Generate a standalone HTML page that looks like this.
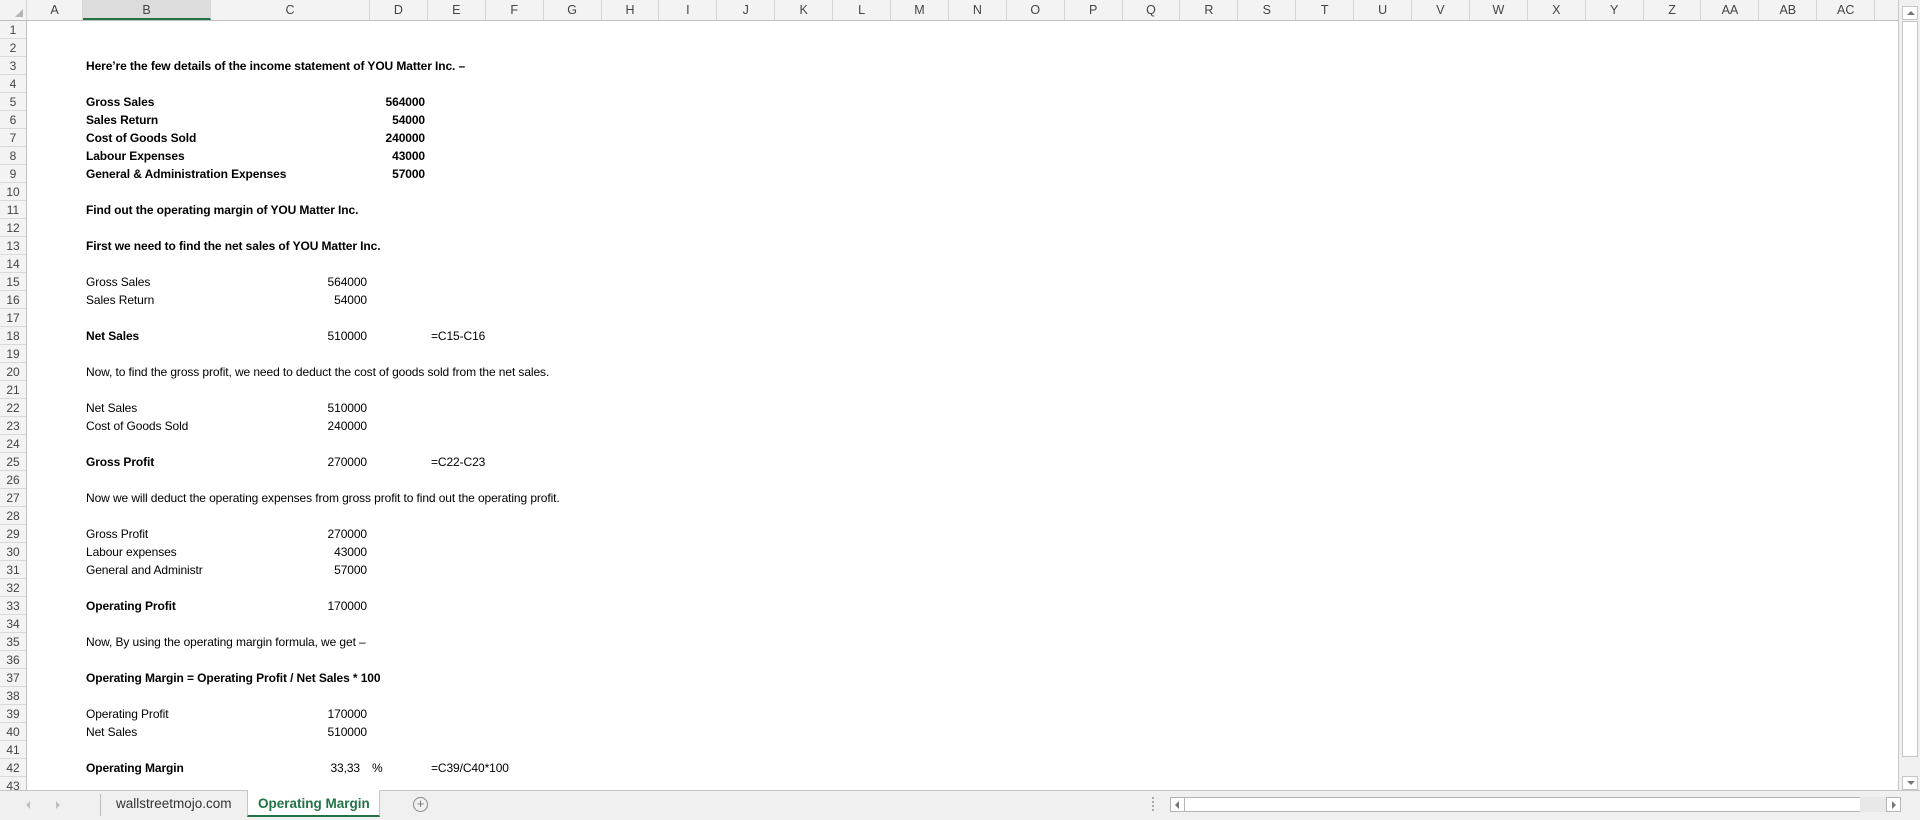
<!DOCTYPE html>
<html><head><meta charset="utf-8"><style>
*{margin:0;padding:0;box-sizing:border-box}
body{width:1920px;height:820px;overflow:hidden;background:#fff;font-family:"Liberation Sans",sans-serif;position:relative;color:#000}
#ch{position:absolute;left:0;top:0;height:21px;display:flex;background:#f3f3f3;border-bottom:1px solid #bfbfbf;width:1898px}
#ch div{border-right:1px solid #d6d6d6;font-size:12.5px;color:#444;text-align:center;line-height:21px;flex:none}
#rh{position:absolute;left:0;top:21px;width:27px;background:#f3f3f3;border-right:1px solid #bfbfbf;height:769px;overflow:hidden}
#rh div{height:18px;border-bottom:1px solid #d9d9d9;font-size:12px;color:#444;text-align:center;line-height:18px}
.c{position:absolute;height:18px;line-height:18px;font-size:12px;white-space:nowrap;letter-spacing:-0.1px}
.b{font-weight:bold}
.r{text-align:right}
#tb{position:absolute;left:0;top:790px;width:1920px;height:30px;background:#f0f0f0;border-top:1px solid #c6c6c6}
</style></head><body>
<div id="ch">
<div style="width:27px;position:relative"><span style="position:absolute;right:3px;bottom:3px;width:0;height:0;border-left:8px solid transparent;border-bottom:8px solid #b5b5b5"></span></div>
<div style="width:56px">A</div>
<div style="width:128px;background:#dcdcdc;border-bottom:2px solid #217346">B</div>
<div style="width:159px">C</div>
<div style="width:57.9px">D</div><div style="width:57.9px">E</div><div style="width:57.9px">F</div><div style="width:57.9px">G</div><div style="width:57.9px">H</div><div style="width:57.9px">I</div><div style="width:57.9px">J</div><div style="width:57.9px">K</div><div style="width:57.9px">L</div><div style="width:57.9px">M</div><div style="width:57.9px">N</div><div style="width:57.9px">O</div><div style="width:57.9px">P</div><div style="width:57.9px">Q</div><div style="width:57.9px">R</div><div style="width:57.9px">S</div><div style="width:57.9px">T</div><div style="width:57.9px">U</div><div style="width:57.9px">V</div><div style="width:57.9px">W</div><div style="width:57.9px">X</div><div style="width:57.9px">Y</div><div style="width:57.9px">Z</div><div style="width:57.9px">AA</div><div style="width:57.9px">AB</div><div style="width:57.9px">AC</div>
<div style="width:20px;border:none"></div>
</div>
<div id="rh">
<div>1</div><div>2</div><div>3</div><div>4</div><div>5</div><div>6</div><div>7</div><div>8</div><div>9</div><div>10</div><div>11</div><div>12</div><div>13</div><div>14</div><div>15</div><div>16</div><div>17</div><div>18</div><div>19</div><div>20</div><div>21</div><div>22</div><div>23</div><div>24</div><div>25</div><div>26</div><div>27</div><div>28</div><div>29</div><div>30</div><div>31</div><div>32</div><div>33</div><div>34</div><div>35</div><div>36</div><div>37</div><div>38</div><div>39</div><div>40</div><div>41</div><div>42</div><div>43</div>
</div>
<!-- grid right edge & vertical scrollbar -->
<div style="position:absolute;left:1898px;top:0;width:1px;height:790px;background:#c6c6c6"></div>
<div style="position:absolute;left:1899px;top:0;width:21px;height:790px;background:#f0f0f0"></div>
<div style="position:absolute;left:1902px;top:6px;width:16px;height:14px;background:#fff;border:1px solid #c6c6c6"><span style="position:absolute;left:4px;top:4px;border-left:4px solid transparent;border-right:4px solid transparent;border-bottom:4px solid #777"></span></div>
<div style="position:absolute;left:1902px;top:21px;width:16px;height:736px;background:#fff;border:1px solid #c6c6c6"></div>
<div style="position:absolute;left:1902px;top:776px;width:16px;height:14px;background:#fff;border:1px solid #c6c6c6"><span style="position:absolute;left:4px;top:4px;border-left:4px solid transparent;border-right:4px solid transparent;border-top:4px solid #777"></span></div>

<div class="c b" style="left:86px;top:57px">Here’re the few details of the income statement of YOU Matter Inc. –</div>
<div class="c b" style="left:86px;top:93px">Gross Sales</div><div class="c b r" style="left:300px;width:125px;top:93px">564000</div>
<div class="c b" style="left:86px;top:111px">Sales Return</div><div class="c b r" style="left:300px;width:125px;top:111px">54000</div>
<div class="c b" style="left:86px;top:129px">Cost of Goods Sold</div><div class="c b r" style="left:300px;width:125px;top:129px">240000</div>
<div class="c b" style="left:86px;top:147px">Labour Expenses</div><div class="c b r" style="left:300px;width:125px;top:147px">43000</div>
<div class="c b" style="left:86px;top:165px">General &amp; Administration Expenses</div><div class="c b r" style="left:300px;width:125px;top:165px">57000</div>
<div class="c b" style="left:86px;top:201px">Find out the operating margin of YOU Matter Inc.</div>
<div class="c b" style="left:86px;top:237px">First we need to find the net sales of YOU Matter Inc.</div>
<div class="c" style="left:86px;top:273px">Gross Sales</div><div class="c r" style="left:250px;width:117px;top:273px">564000</div>
<div class="c" style="left:86px;top:291px">Sales Return</div><div class="c r" style="left:250px;width:117px;top:291px">54000</div>
<div class="c b" style="left:86px;top:327px">Net Sales</div><div class="c r" style="left:250px;width:117px;top:327px">510000</div><div class="c" style="left:431px;top:327px">=C15-C16</div>
<div class="c" style="left:86px;top:363px">Now, to find the gross profit, we need to deduct the cost of goods sold from the net sales.</div>
<div class="c" style="left:86px;top:399px">Net Sales</div><div class="c r" style="left:250px;width:117px;top:399px">510000</div>
<div class="c" style="left:86px;top:417px">Cost of Goods Sold</div><div class="c r" style="left:250px;width:117px;top:417px">240000</div>
<div class="c b" style="left:86px;top:453px">Gross Profit</div><div class="c r" style="left:250px;width:117px;top:453px">270000</div><div class="c" style="left:431px;top:453px">=C22-C23</div>
<div class="c" style="left:86px;top:489px">Now we will deduct the operating expenses from gross profit to find out the operating profit.</div>
<div class="c" style="left:86px;top:525px">Gross Profit</div><div class="c r" style="left:250px;width:117px;top:525px">270000</div>
<div class="c" style="left:86px;top:543px">Labour expenses</div><div class="c r" style="left:250px;width:117px;top:543px">43000</div>
<div class="c" style="left:86px;top:561px">General and Administr</div><div class="c r" style="left:250px;width:117px;top:561px">57000</div>
<div class="c b" style="left:86px;top:597px">Operating Profit</div><div class="c r" style="left:250px;width:117px;top:597px">170000</div>
<div class="c" style="left:86px;top:633px">Now, By using the operating margin formula, we get –</div>
<div class="c b" style="left:86px;top:669px">Operating Margin = Operating Profit / Net Sales * 100</div>
<div class="c" style="left:86px;top:705px">Operating Profit</div><div class="c r" style="left:250px;width:117px;top:705px">170000</div>
<div class="c" style="left:86px;top:723px">Net Sales</div><div class="c r" style="left:250px;width:117px;top:723px">510000</div>
<div class="c b" style="left:86px;top:759px">Operating Margin</div><div class="c r" style="left:250px;width:110px;top:759px">33,33</div><div class="c" style="left:372px;top:759px">%</div><div class="c" style="left:431px;top:759px">=C39/C40*100</div>

<div id="tb">
<span style="position:absolute;left:26px;top:10px;border-top:4px solid transparent;border-bottom:4px solid transparent;border-right:4px solid #c0c0c0"></span>
<span style="position:absolute;left:56px;top:10px;border-top:4px solid transparent;border-bottom:4px solid transparent;border-left:4px solid #c0c0c0"></span>
<div style="position:absolute;left:100px;top:3px;width:1px;height:22px;background:#bbb"></div>
<div style="position:absolute;left:116px;top:5px;font-size:13.5px;color:#333">wallstreetmojo.com</div>
<div style="position:absolute;left:247px;top:-1px;width:133px;height:27px;background:#fff;border-bottom:2px solid #217346;border-left:1px solid #c6c6c6;border-right:1px solid #c6c6c6"></div>
<div style="position:absolute;left:258px;top:5px;font-size:13.5px;font-weight:bold;color:#217346">Operating Margin</div>
<div style="position:absolute;left:413px;top:6px;width:15px;height:15px;border:1px solid #888;border-radius:50%;text-align:center;line-height:12px;font-size:13px;color:#777">+</div>
<div style="position:absolute;left:1152px;top:6px;width:2px;height:14px;border-left:2px dotted #aaa"></div>
<div style="position:absolute;left:1170px;top:6px;width:731px;height:15px;background:#fff;border:1px solid #b5b5b5"></div>
<div style="position:absolute;left:1170px;top:6px;width:15px;height:15px;border:1px solid #b5b5b5;background:#fff"><span style="position:absolute;left:4px;top:3px;border-top:4px solid transparent;border-bottom:4px solid transparent;border-right:4px solid #777"></span></div>
<div style="position:absolute;left:1860px;top:6px;width:30px;height:15px;background:#e8e8e8"></div>
<div style="position:absolute;left:1886px;top:6px;width:15px;height:15px;border:1px solid #b5b5b5;background:#fff"><span style="position:absolute;left:5px;top:3px;border-top:4px solid transparent;border-bottom:4px solid transparent;border-left:4px solid #777"></span></div>
</div>
</body></html>
